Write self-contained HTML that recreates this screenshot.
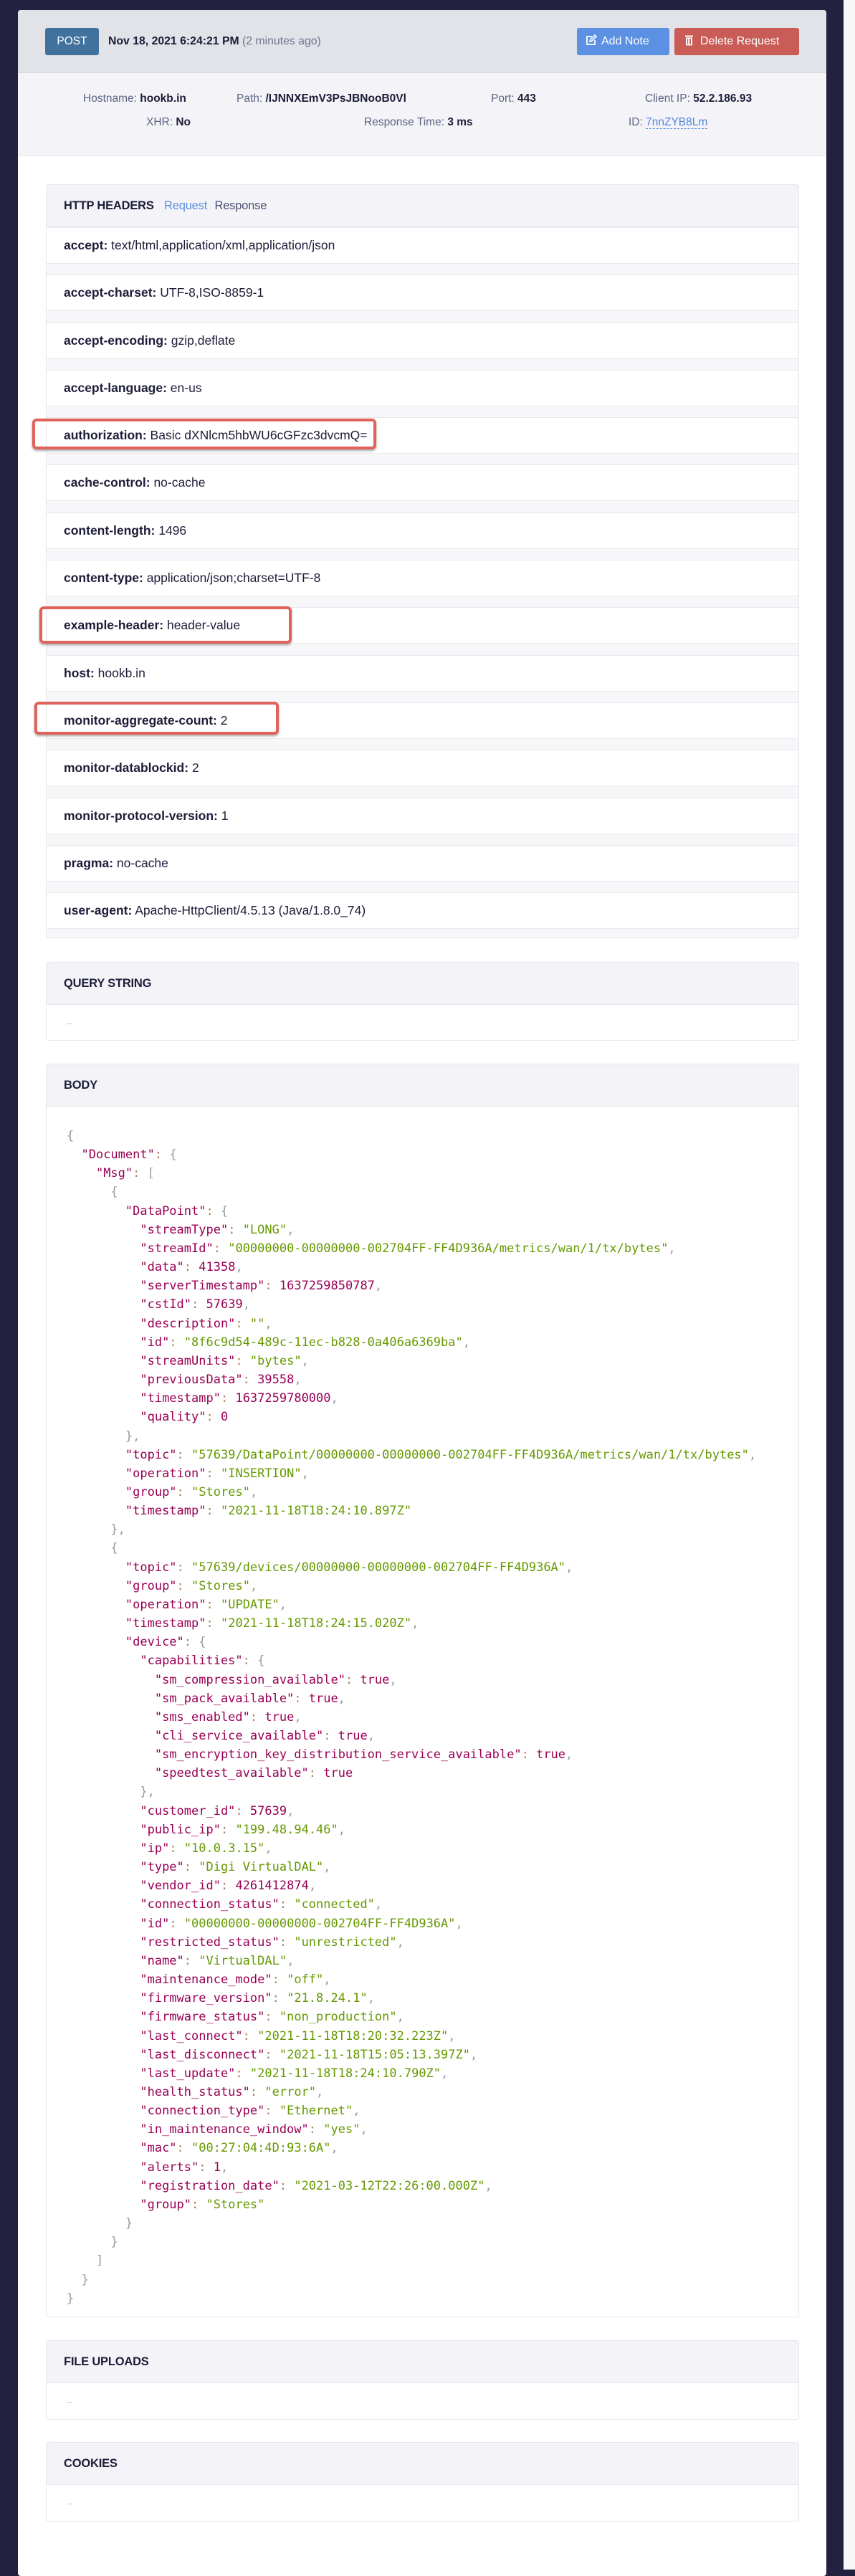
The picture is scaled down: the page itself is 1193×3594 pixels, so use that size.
<!DOCTYPE html>
<html><head><meta charset="utf-8"><style>
*{box-sizing:border-box;margin:0;padding:0}
body{width:1193px;height:3585px;background:#222240;font-family:"Liberation Sans",sans-serif;color:#1c1c38;position:relative;overflow:hidden}
.strip{position:absolute;left:1177px;top:0;width:16px;height:3585px;background:#f7f7f7}
.main{position:absolute;left:25px;top:14px;width:1128px;height:3580px;background:#fff;border-radius:4px;overflow:hidden}
.top{position:absolute;left:0;top:0;width:1128px;height:88px;background:#e2e3e8;border-bottom:1px solid #d6d7de}
.info{position:absolute;left:0;top:88px;width:1128px;height:116px;background:#f4f4f8;border-bottom:1px solid #e6e6ec}
.abs{position:absolute;white-space:nowrap}
.post{left:38px;top:25px;width:75px;height:38px;background:#41729e;border-radius:3px;color:#fff;font-size:15.5px;line-height:38px;text-align:center}
.btn{top:25px;height:38px;border-radius:3px;color:#fff;font-size:16px;line-height:38px;padding-left:12px}
.lbl{color:#5c6483;font-size:15.5px}
.lbl b{color:#1c1c38}
.card{position:absolute;left:64px;width:1051px;border:1px solid #e6e6ec;border-radius:4px;background:#fff;overflow:hidden}
.ch{height:59px;background:#f4f4f8;border-bottom:1px solid #e6e6ec;padding-left:24px;font-weight:bold;font-size:16.5px;line-height:58px;letter-spacing:-.2px}
.dash{padding:0 0 0 28px;color:#c4c6d6;font-size:14px;line-height:50px}
.rows{background:#f7f7f9}
.row{height:51px;background:#fff;border-top:1px solid #e8e8ee;border-bottom:1px solid #e8e8ee;margin-bottom:15.3px;padding-left:24px;font-size:17.5px;line-height:49px}
.row b{font-weight:bold}
.box{position:absolute;border:4px solid #e0625a;border-radius:6px;box-shadow:0 2px 3px rgba(0,0,0,.35)}
pre{font-family:"DejaVu Sans Mono","Liberation Mono",monospace;font-size:17px;line-height:26.15px;color:#999;padding:0 0 0 28px}
.k{color:#990055}.s{color:#669900}.n{color:#990055}.c{color:#a67f59}
</style></head><body>
<div class="strip"></div>
<div class="main">
 <div class="top">
  <div class="abs post">POST</div>
  <div class="abs" style="left:126px;top:25px;line-height:38px;font-size:15.8px"><b>Nov 18, 2021 6:24:21 PM</b> <span style="color:#6d7391">(2 minutes ago)</span></div>
  <div class="abs btn" style="left:780px;width:129px;background:#5b90e2">
   <svg width="16" height="16" viewBox="0 0 16 16" style="vertical-align:-2px;margin-right:6px"><path d="M9 3H2v11h11V8" fill="none" stroke="#fff" stroke-width="1.8"/><path d="M6 10l1-3 6-6 2 2-6 6z" fill="none" stroke="#fff" stroke-width="1.6"/></svg>Add Note</div>
  <div class="abs btn" style="left:916px;width:174px;background:#c95c56;padding-left:14px">
   <svg width="13" height="16" viewBox="0 0 13 16" style="vertical-align:-2px;margin-right:9px"><rect x="1" y="1.5" width="11" height="2" fill="#fff"/><rect x="2" y="4.5" width="9" height="11" rx="1.5" fill="#fff"/><path d="M4.5 6v8M6.5 6v8M8.5 6v8" stroke="#c95c56"/></svg>Delete Request</div>
 </div>
 <div class="info">
  <div class="abs lbl" style="left:91px;top:27px">Hostname: <b>hookb.in</b></div>
  <div class="abs lbl" style="left:305px;top:27px">Path: <b>/IJNNXEmV3PsJBNooB0Vl</b></div>
  <div class="abs lbl" style="left:660px;top:27px">Port: <b>443</b></div>
  <div class="abs lbl" style="left:875px;top:27px">Client IP: <b>52.2.186.93</b></div>
  <div class="abs lbl" style="left:179px;top:60px">XHR: <b>No</b></div>
  <div class="abs lbl" style="left:483px;top:60px">Response Time: <b>3 ms</b></div>
  <div class="abs lbl" style="left:852px;top:60px">ID: <span style="color:#4f86d8;border-bottom:1px dashed #4f86d8">7nnZYB8Lm</span></div>
 </div>
</div>

<div class="card" style="top:257px;height:1052px">
 <div class="ch">HTTP HEADERS <span style="color:#5b90e2;font-weight:normal;margin-left:10px">Request</span> <span style="color:#4a5072;font-weight:normal;margin-left:6px">Response</span></div>
 <div class="rows" style="height:992px">
  <div class="row"><b>accept:</b> text/html,application/xml,application/json</div>
  <div class="row"><b>accept-charset:</b> UTF-8,ISO-8859-1</div>
  <div class="row"><b>accept-encoding:</b> gzip,deflate</div>
  <div class="row"><b>accept-language:</b> en-us</div>
  <div class="row"><b>authorization:</b> Basic dXNlcm5hbWU6cGFzc3dvcmQ=</div>
  <div class="row"><b>cache-control:</b> no-cache</div>
  <div class="row"><b>content-length:</b> 1496</div>
  <div class="row"><b>content-type:</b> application/json;charset=UTF-8</div>
  <div class="row"><b>example-header:</b> header-value</div>
  <div class="row"><b>host:</b> hookb.in</div>
  <div class="row"><b>monitor-aggregate-count:</b> 2</div>
  <div class="row"><b>monitor-datablockid:</b> 2</div>
  <div class="row"><b>monitor-protocol-version:</b> 1</div>
  <div class="row"><b>pragma:</b> no-cache</div>
  <div class="row"><b>user-agent:</b> Apache-HttpClient/4.5.13 (Java/1.8.0_74)</div>
 </div>
</div>
<div class="box" style="left:45px;top:584px;width:480px;height:43px"></div>
<div class="box" style="left:55px;top:846px;width:352px;height:52px"></div>
<div class="box" style="left:48px;top:979px;width:341px;height:46px"></div>

<div class="card" style="top:1342px;height:110px"><div class="ch">QUERY STRING</div><div class="dash">–</div></div>

<div class="card" style="top:1484px;height:1749px"><div class="ch">BODY</div>
<pre style="padding-top:28px"><span>{</span>
  <span class="k">"Document"</span><span class="c">:</span> {
    <span class="k">"Msg"</span><span class="c">:</span> [
      {
        <span class="k">"DataPoint"</span><span class="c">:</span> {
          <span class="k">"streamType"</span><span class="c">:</span> <span class="s">"LONG"</span>,
          <span class="k">"streamId"</span><span class="c">:</span> <span class="s">"00000000-00000000-002704FF-FF4D936A/metrics/wan/1/tx/bytes"</span>,
          <span class="k">"data"</span><span class="c">:</span> <span class="n">41358</span>,
          <span class="k">"serverTimestamp"</span><span class="c">:</span> <span class="n">1637259850787</span>,
          <span class="k">"cstId"</span><span class="c">:</span> <span class="n">57639</span>,
          <span class="k">"description"</span><span class="c">:</span> <span class="s">""</span>,
          <span class="k">"id"</span><span class="c">:</span> <span class="s">"8f6c9d54-489c-11ec-b828-0a406a6369ba"</span>,
          <span class="k">"streamUnits"</span><span class="c">:</span> <span class="s">"bytes"</span>,
          <span class="k">"previousData"</span><span class="c">:</span> <span class="n">39558</span>,
          <span class="k">"timestamp"</span><span class="c">:</span> <span class="n">1637259780000</span>,
          <span class="k">"quality"</span><span class="c">:</span> <span class="n">0</span>
        },
        <span class="k">"topic"</span><span class="c">:</span> <span class="s">"57639/DataPoint/00000000-00000000-002704FF-FF4D936A/metrics/wan/1/tx/bytes"</span>,
        <span class="k">"operation"</span><span class="c">:</span> <span class="s">"INSERTION"</span>,
        <span class="k">"group"</span><span class="c">:</span> <span class="s">"Stores"</span>,
        <span class="k">"timestamp"</span><span class="c">:</span> <span class="s">"2021-11-18T18:24:10.897Z"</span>
      },
      {
        <span class="k">"topic"</span><span class="c">:</span> <span class="s">"57639/devices/00000000-00000000-002704FF-FF4D936A"</span>,
        <span class="k">"group"</span><span class="c">:</span> <span class="s">"Stores"</span>,
        <span class="k">"operation"</span><span class="c">:</span> <span class="s">"UPDATE"</span>,
        <span class="k">"timestamp"</span><span class="c">:</span> <span class="s">"2021-11-18T18:24:15.020Z"</span>,
        <span class="k">"device"</span><span class="c">:</span> {
          <span class="k">"capabilities"</span><span class="c">:</span> {
            <span class="k">"sm_compression_available"</span><span class="c">:</span> <span class="n">true</span>,
            <span class="k">"sm_pack_available"</span><span class="c">:</span> <span class="n">true</span>,
            <span class="k">"sms_enabled"</span><span class="c">:</span> <span class="n">true</span>,
            <span class="k">"cli_service_available"</span><span class="c">:</span> <span class="n">true</span>,
            <span class="k">"sm_encryption_key_distribution_service_available"</span><span class="c">:</span> <span class="n">true</span>,
            <span class="k">"speedtest_available"</span><span class="c">:</span> <span class="n">true</span>
          },
          <span class="k">"customer_id"</span><span class="c">:</span> <span class="n">57639</span>,
          <span class="k">"public_ip"</span><span class="c">:</span> <span class="s">"199.48.94.46"</span>,
          <span class="k">"ip"</span><span class="c">:</span> <span class="s">"10.0.3.15"</span>,
          <span class="k">"type"</span><span class="c">:</span> <span class="s">"Digi VirtualDAL"</span>,
          <span class="k">"vendor_id"</span><span class="c">:</span> <span class="n">4261412874</span>,
          <span class="k">"connection_status"</span><span class="c">:</span> <span class="s">"connected"</span>,
          <span class="k">"id"</span><span class="c">:</span> <span class="s">"00000000-00000000-002704FF-FF4D936A"</span>,
          <span class="k">"restricted_status"</span><span class="c">:</span> <span class="s">"unrestricted"</span>,
          <span class="k">"name"</span><span class="c">:</span> <span class="s">"VirtualDAL"</span>,
          <span class="k">"maintenance_mode"</span><span class="c">:</span> <span class="s">"off"</span>,
          <span class="k">"firmware_version"</span><span class="c">:</span> <span class="s">"21.8.24.1"</span>,
          <span class="k">"firmware_status"</span><span class="c">:</span> <span class="s">"non_production"</span>,
          <span class="k">"last_connect"</span><span class="c">:</span> <span class="s">"2021-11-18T18:20:32.223Z"</span>,
          <span class="k">"last_disconnect"</span><span class="c">:</span> <span class="s">"2021-11-18T15:05:13.397Z"</span>,
          <span class="k">"last_update"</span><span class="c">:</span> <span class="s">"2021-11-18T18:24:10.790Z"</span>,
          <span class="k">"health_status"</span><span class="c">:</span> <span class="s">"error"</span>,
          <span class="k">"connection_type"</span><span class="c">:</span> <span class="s">"Ethernet"</span>,
          <span class="k">"in_maintenance_window"</span><span class="c">:</span> <span class="s">"yes"</span>,
          <span class="k">"mac"</span><span class="c">:</span> <span class="s">"00:27:04:4D:93:6A"</span>,
          <span class="k">"alerts"</span><span class="c">:</span> <span class="n">1</span>,
          <span class="k">"registration_date"</span><span class="c">:</span> <span class="s">"2021-03-12T22:26:00.000Z"</span>,
          <span class="k">"group"</span><span class="c">:</span> <span class="s">"Stores"</span>
        }
      }
    ]
  }
}</pre>
</div>

<div class="card" style="top:3265px;height:111px"><div class="ch">FILE UPLOADS</div><div class="dash">–</div></div>
<div class="card" style="top:3407px;height:111px"><div class="ch">COOKIES</div><div class="dash">–</div></div>
</body></html>
